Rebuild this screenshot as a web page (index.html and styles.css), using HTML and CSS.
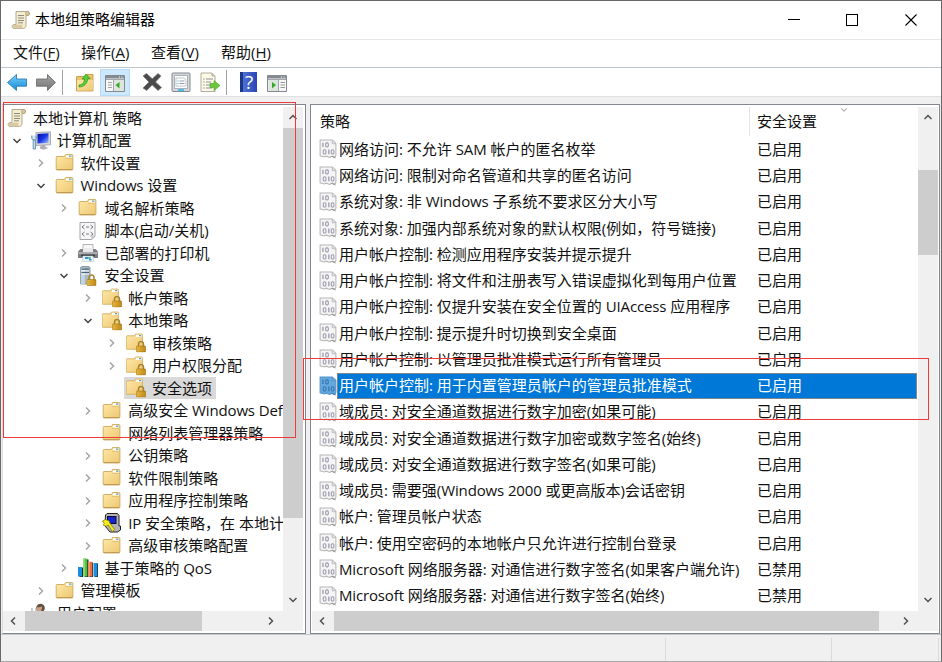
FILE: index.html
```html
<!DOCTYPE html>
<html lang="zh-CN">
<head>
    <meta charset="UTF-8">
    <title>本地组策略编辑器</title>
    <link rel="stylesheet" href="styles.css">
</head>
<body>
    <!-- 图标定义 -->
    <svg class="defs">
        <defs>
            <linearGradient id="gFolder" x1="0" y1="0" x2="1" y2="1"><stop offset="0" stop-color="#ffe9a8"/><stop offset="1" stop-color="#edc772"/></linearGradient>
            <linearGradient id="gLock" x1="0" y1="0" x2="1" y2="0"><stop offset="0" stop-color="#efc247"/><stop offset="1" stop-color="#b98010"/></linearGradient>
            <linearGradient id="gBlue" x1="0" y1="0" x2="0" y2="1"><stop offset="0" stop-color="#78d0fb"/><stop offset="1" stop-color="#148ad5"/></linearGradient>
            <linearGradient id="gGray" x1="0" y1="0" x2="0" y2="1"><stop offset="0" stop-color="#a5a5a5"/><stop offset="1" stop-color="#747474"/></linearGradient>
            <linearGradient id="gScreen" x1="0" y1="0" x2="1" y2="1"><stop offset="0" stop-color="#000c9c"/><stop offset=".5" stop-color="#1834e8"/><stop offset="1" stop-color="#a8c4ff"/></linearGradient>
        </defs>
        <symbol id="scroll" viewBox="0 0 20 20">
            <path d="M5 1.500h12c2 0 2 4 0 4h-2V15c0 2-1 3.500-2.500 3.500H3c-2.500 0-2.500-4 0-4h2z" fill="#f4edcf" stroke="#aaa083" stroke-width=".9"/>
            <path d="M15 5.500c-1-1-.5-4 1.500-4 2.300 0 2.300 4 .2 4z" fill="#d9c99a" stroke="#a99c78" stroke-width=".7"/>
            <path d="M1.500 16.500c.3 1.500 1 2 2 2h9c-1.200-.7-1.500-2-1-3.800H3c-1 0-1.500.8-1.500 1.800z" fill="#d8cba2"/>
            <path d="M7 5.500h6M7 8h6M7 10.500h6M7 12.800h5" stroke="#8d8a80" stroke-width="1"/>
        </symbol>
        <symbol id="folder" viewBox="0 0 20 20">
            <path d="M2 3.500h7.500l1-2h6.500c.5 0 .9.400.9.900V16c0 .5-.3.800-.8.800H2c-.5 0-.8-.3-.8-.8V4.300c0-.5.300-.8.800-.8z" fill="url(#gFolder)" stroke="#cda95c" stroke-width=".9"/>
            <path d="M11 2.300h6v2.200H11z" fill="#fffdf4"/><path d="M14 2.500h2.500v1.300H14z" fill="#53a5d8"/>
            <path d="M10 5.500h7.500" stroke="#dfbd73" stroke-width=".8"/>
            <path d="M1.500 16.700h16" stroke="#b88f45" stroke-width=".9"/>
        </symbol>
        <symbol id="lock" viewBox="0 0 10 12">
            <path d="M2.500 6V3.800a2.500 2.800 0 0 1 5 0V6" fill="none" stroke="#a7842d" stroke-width="1.500"/>
            <rect x=".4" y="5.500" width="9.200" height="6" rx=".6" fill="url(#gLock)" stroke="#a47414" stroke-width=".6"/>
            <path d="M1 7.500h8M1 9.500h8" stroke="#cf9d2b" stroke-width=".7"/>
        </symbol>
        <symbol id="folderlock" viewBox="0 0 20 20">
            <path d="M1 2.800h7.500l1-1.800h6c.5 0 .9.400.9.900v13.600c0 .5-.3.800-.8.800H1c-.5 0-.8-.3-.8-.8V3.600c0-.5.300-.8.800-.8z" fill="url(#gFolder)" stroke="#cda95c" stroke-width=".8"/>
            <path d="M10 1.800h5.500V4H10z" fill="#fffdf4"/><path d="M13 2h2v1.200h-2z" fill="#53a5d8"/>
            <use href="#lock" x="10" y="7.500" width="10" height="12"/>
        </symbol>
        <symbol id="computer" viewBox="0 0 20 20">
            <path d="M5 1.500 19.500.8v13l-14.500.7z" fill="#d5d6da" stroke="#9a9ca3" stroke-width=".8"/>
            <path d="M6.500 3 17.500 2.300v9.500L6.500 12.500z" fill="url(#gScreen)"/>
            <path d="m10 14 4-.2.600 2.200 3 1-5 1.700-4-1.200z" fill="#aeb0b5"/>
            <path d="M.8 4.500v3.200l1.700 1.500h1L5 7.700V4.500M2.200 9h2.200v9H2.200z" fill="#cfe6f4" stroke="#6790ac" stroke-width="1"/>
        </symbol>
        <symbol id="script" viewBox="0 0 20 20">
            <path d="M2 1.500h15v13.500l-3 3.500H2z" fill="#f6f6f8" stroke="#a4a4a8" stroke-width="1"/>
            <path d="M6.500 4 4 6l2.500 2M12.500 4 15 6l-2.500 2M8 6h3M6.500 11 4 13l2.500 2M12.500 11l2.500 2-2.500 2M8 13h3" fill="none" stroke="#77777d" stroke-width="1"/>
            <path d="m17 14-4 .5.500 4z" fill="#ccc"/>
        </symbol>
        <symbol id="printer" viewBox="0 0 20 20">
            <path d="M5 1.500h10V8H5z" fill="#f7f7f7" stroke="#a2a2a2" stroke-width=".8"/>
            <path d="M2.500 6h15L20 8.500V15H0V8.500z" fill="#7b7e83"/>
            <path d="M5 5h10v4H5z" fill="#eaeaea"/><path d="M.5 9h19v2.200H.5z" fill="#a9acb1"/>
            <path d="M3 11.500h14v2H3z" fill="#3c3e42"/>
            <path d="M5 13h10l1 5.500H4z" fill="#e9f3f8" stroke="#b8c2c8" stroke-width=".5"/>
            <path d="M7 14h3v2H7zM11 16h2.500v1.500H11z" fill="#2a96d5"/><path d="M10 14h3v2h-3z" fill="#6cc1a3"/>
        </symbol>
        <symbol id="server" viewBox="0 0 20 20">
            <path d="M2.500 1.500 4 .5h7l1 1V18H2.500z" fill="#a7bac7" stroke="#788c9c" stroke-width=".8"/>
            <path d="M2.800 2h4v16h-4z" fill="#c6d5dd"/>
            <path d="M3.500 3.200h7.500M3.500 6.500h7.500" stroke="#4e6474" stroke-width="1.200"/>
            <path d="M3.500 4.800h7.500M3.500 8h7.500" stroke="#f1f7fa" stroke-width="1"/>
            <use href="#lock" x="8.500" y="8" width="10" height="12"/>
        </symbol>
        <symbol id="ipsec" viewBox="0 0 20 20">
            <path d="M3.500 2 5 .5h10.500l1.500 2V13h1.500v4l-3 2H8L3 13z" fill="#b3b3b7" stroke="#222" stroke-width="1"/>
            <path d="M5 3h9.500v8H5z" fill="#0a0a30"/><path d="M6 4h7.500v6H6z" fill="#1626cf"/>
            <path d="m.5 8 3-1.500 3.500 1.300.7 2 4.800 6.700-2 2-4.300-6.500L4 13.300 1 12l1.300-1.500z" fill="#f6ec19" stroke="#7d7800" stroke-width=".7"/>
        </symbol>
        <symbol id="qos" viewBox="0 0 20 20">
            <path d="M1.500 9.500h3.500V19H1.500zM6.500 1.500h4V19h-4zM11.500 4.500h3.500V19h-3.500zM16.500 5.500h3.500V19h-3.500z" fill="#1c2733"/>
            <path d="M0 9h4v9.500H0z" fill="#1c8edb"/><path d="M5.300.5h4v18h-4z" fill="#54c23a"/>
            <path d="M10.500 3.800h3.800v14.700h-3.800z" fill="#f0703d"/><path d="M15.500 5h3.800v13.500h-3.800z" fill="#1c8edb"/>
            <path d="M5.300.5h1.500v18H5.300z" fill="#8fe07a"/><path d="M10.500 3.800h1.300v14.700h-1.300z" fill="#ff9c70"/>
        </symbol>
        <symbol id="user" viewBox="0 0 20 20">
            <circle cx="9.500" cy="5" r="4.300" fill="#5f5148"/><path d="M6 4c2 1 3 0 5-.5 0 3-1 6-3 6S6 7 6 4z" fill="#d79f7e"/>
            <path d="M4 19c0-6 3-9 6-9s7 3 7 9z" fill="#6f8798"/>
            <path d="M1 5v3l2 2 2-2V5" fill="none" stroke="#9bb4c2" stroke-width="1.200"/>
        </symbol>
        <symbol id="policy" viewBox="0 0 17 19">
            <path d="M1 1h11.500L16 4v11.500l-1 2-2.500-1.300L10 17.500l-3-1.200L5 17l-4-1z" fill="var(--paper, #f5f5f6)" stroke="var(--edge, #b6b6b8)" stroke-width="1"/>
            <path d="M12.500 1v3.500H16" fill="var(--paper, #ddd)" stroke="var(--edge, #b6b6b8)" stroke-width=".8"/>
            <g fill="none" stroke="var(--ink, #9a99ac)">
                <path d="M3.700 3.500v4M9.300 10v4.500" stroke-width="1.200"/>
                <rect x="6.300" y="3.700" width="2.500" height="3.800" rx="1"/>
                <rect x="4" y="10.200" width="2.500" height="4" rx="1"/>
                <rect x="11.600" y="10.200" width="2.500" height="4" rx="1"/>
            </g>
            <path d="M10 16.500h4.500l1.500 2z" fill="var(--ink, #999)"/>
        </symbol>
        <symbol id="chev" viewBox="0 0 10 10"><path d="M1.500 3 5 6.500 8.500 3" fill="none" stroke="currentColor" stroke-width="1.500"/></symbol>
    </svg>

    <div class="window">
        <div class="titlebar">
            <svg class="app-icon"><use href="#scroll"/></svg>
            <span class="title">本地组策略编辑器</span>
            <svg class="win-btns" viewBox="0 0 130 14" shape-rendering="crispEdges">
                <path d="M0 6.500h12M58.500 1.500h11v11h-11z" fill="none" stroke="#000"/>
                <path d="m117.500 1.500 11 11m0-11-11 11" stroke="#000" fill="none" shape-rendering="auto" stroke-width="1.100"/>
            </svg>
        </div>

        <div class="menubar">
            <span>文件(<u>F</u>)</span><span>操作(<u>A</u>)</span><span>查看(<u>V</u>)</span><span>帮助(<u>H</u>)</span>
        </div>

        <div class="toolbar">
            <svg class="tool" viewBox="0 0 20 20"><path d="M.5 10.500 9.500 2.500V7H19.500v7.200H9.500V18.500z" fill="url(#gBlue)" stroke="#2c7fb4" stroke-width=".9"/></svg>
            <svg class="tool fwd" viewBox="0 0 20 20"><path d="M19.500 10.500 11.500 2.500V7H.5v7.200h11V18.500z" fill="url(#gGray)" stroke="#707070" stroke-width=".9"/></svg>
            <i class="sep"></i>
            <svg class="tool up" viewBox="0 0 20 20">
                <path d="M1.500 4.500H10l1.500-2H18v16.500H1.500z" fill="#ebc56e" stroke="#bc9240" stroke-width=".8"/>
                <path d="M2 8h16v10.500H2z" fill="url(#gFolder)"/>
                <path d="M4 13c4.500-.5 5.300-3.500 5.500-6H7l4-5 4.300 4.700h-2.500C12.500 11 9.500 15 4 15z" fill="#56ce36" stroke="#329524" stroke-width=".7"/>
            </svg>
            <span class="tool-on">
                <svg class="tool" viewBox="0 0 20 20">
                    <path d="M.5 3.500h19v16H.5z" fill="#f7f7f7" stroke="#85898e"/><path d="M1 4h18v2.500H1z" fill="#848a92"/>
                    <path d="M14 4.500h1v1h-1zM16.500 4.500h1v1h-1z" fill="#fff"/><path d="M1 7.500h18M8.500 8v11" stroke="#a3a7ac"/>
                    <path d="M3 10.500h4M3 13h4M3 15.500h4" stroke="#a4a4a4"/><path d="M9 8h10v11H9z" fill="#dce6dc"/><path d="M14.500 10v6.500L10.500 13z" fill="#3aa52b"/>
                </svg>
            </span>
            <svg class="tool del" viewBox="0 0 20 20"><path d="m1 4 3.500-2.500 5.800 5.300L16 1.500 19 4l-5.500 6 6 5.500-3.500 3-5.800-5.500-5.500 5.500-3.700-2.500L7 10z" fill="#4b4b4b" stroke="#777" stroke-width=".7"/></svg>
            <svg class="tool prop" viewBox="0 0 20 20">
                <rect x="1" y="1" width="18" height="18.500" rx="1" fill="#d3d7dc" stroke="#84898f"/>
                <path d="M3.500 3.500h13v13h-13z" fill="#fbfbfb" stroke="#9ca2a8" stroke-width=".8"/><path d="M5 6h8l2 2v6H5z" fill="#fff" stroke="#b3b7bd" stroke-width=".8"/>
                <path d="M6.500 9h1M6.500 11.500h1" stroke="#2a9fe0"/><path d="M8.500 9h5M8.500 11.500h5" stroke="#9299a0"/><path d="M7 18h6" stroke="#29b5e8" stroke-width="1.500"/>
            </svg>
            <svg class="tool exp" viewBox="0 0 20 20">
                <path d="M1 1h11l3 3v15.500H1z" fill="#fdf9e7" stroke="#a9a391" stroke-width=".9"/><path d="M12 1v3h3" fill="#ddd4b8" stroke="#a9a391" stroke-width=".8"/>
                <path d="M3.500 7h1M3.500 10h1M3.500 13h1M3.500 16h1" stroke="#5a5a64"/><path d="M6 7h7M6 10h5M6 13h4M6 16h6" stroke="#8d8b9b"/>
                <path d="M10 11.500h4v-3l6 5-6 5v-3h-4z" fill="#6cc73d" stroke="#47a52d" stroke-width=".6"/>
            </svg>
            <i class="sep sep2"></i>
            <span class="help">?</span>
            <svg class="tool act" viewBox="0 0 20 20">
                <path d="M.5 3.500h19v16H.5z" fill="#f7f7f7" stroke="#85898e"/><path d="M1 4h18v2.500H1z" fill="#848a92"/>
                <path d="M14 4.500h1v1h-1zM16.500 4.500h1v1h-1z" fill="#fff"/><path d="M1 7.500h18M11.500 8v11" stroke="#a3a7ac"/>
                <path d="M1.500 8H11v11H1.500z" fill="#dce6dc"/><path d="M13.500 10.500H18M13.500 13H18M13.500 15.500H18" stroke="#999"/><path d="M5 10v6.500L9 13z" fill="#3aa52b"/>
            </svg>
        </div>

        <div class="main">
            <div class="pane tree-pane">
                <div class="tree" id="tree"></div>
                <div class="vbar">
                    <svg class="arrow up-arrow"><use href="#chev"/></svg>
                    <div class="thumb"></div>
                    <svg class="arrow"><use href="#chev"/></svg>
                </div>
                <div class="hbar">
                    <svg class="arrow left-arrow"><use href="#chev"/></svg>
                    <div class="thumb"></div>
                    <svg class="arrow right-arrow"><use href="#chev"/></svg>
                </div>
                <div class="corner"></div>
            </div>

            <div class="pane list-pane">
                <div class="list">
                    <div class="list-head">
                        <span class="col1">策略</span>
                        <span class="col2">安全设置<svg class="sort"><use href="#chev"/></svg></span>
                    </div>
                    <div id="rows"></div>
                </div>
                <div class="vbar">
                    <svg class="arrow up-arrow"><use href="#chev"/></svg>
                    <div class="thumb"></div>
                    <svg class="arrow"><use href="#chev"/></svg>
                </div>
                <div class="hbar">
                    <svg class="arrow left-arrow"><use href="#chev"/></svg>
                    <div class="thumb"></div>
                    <svg class="arrow right-arrow"><use href="#chev"/></svg>
                </div>
                <div class="corner"></div>
            </div>
        </div>

        <div class="statusbar"><span></span><span></span><span></span></div>

        <!-- 红色标注框 -->
        <div class="mark mark-tree"></div>
        <div class="mark mark-row"></div>
    </div>

    <script>
        // [层级, 图标, 名称, 展开状态]
        const tree = [
            [0, 'scroll', '本地计算机 策略', ''],
            [1, 'computer', '计算机配置', 'open'],
            [2, 'folder', '软件设置', 'closed'],
            [2, 'folder', 'Windows 设置', 'open'],
            [3, 'folder', '域名解析策略', 'closed'],
            [3, 'script', '脚本(启动/关机)', ''],
            [3, 'printer', '已部署的打印机', 'closed'],
            [3, 'server', '安全设置', 'open'],
            [4, 'folderlock', '帐户策略', 'closed'],
            [4, 'folderlock', '本地策略', 'open'],
            [5, 'folderlock', '审核策略', 'closed'],
            [5, 'folderlock', '用户权限分配', 'closed'],
            [5, 'folderlock', '安全选项', '', true],
            [4, 'folder', '高级安全 Windows Def', 'closed'],
            [4, 'folder', '网络列表管理器策略', ''],
            [4, 'folder', '公钥策略', 'closed'],
            [4, 'folder', '软件限制策略', 'closed'],
            [4, 'folder', '应用程序控制策略', 'closed'],
            [4, 'ipsec', 'IP 安全策略，在 本地计', 'closed'],
            [4, 'folder', '高级审核策略配置', 'closed'],
            [3, 'qos', '基于策略的 QoS', 'closed'],
            [2, 'folder', '管理模板', 'closed'],
            [1, 'user', '用户配置', '']
        ];

        const policies = [
            ['网络访问: 不允许 SAM 帐户的匿名枚举', '已启用'],
            ['网络访问: 限制对命名管道和共享的匿名访问', '已启用'],
            ['系统对象: 非 Windows 子系统不要求区分大小写', '已启用'],
            ['系统对象: 加强内部系统对象的默认权限(例如，符号链接)', '已启用'],
            ['用户帐户控制: 检测应用程序安装并提示提升', '已启用'],
            ['用户帐户控制: 将文件和注册表写入错误虚拟化到每用户位置', '已启用'],
            ['用户帐户控制: 仅提升安装在安全位置的 UIAccess 应用程序', '已启用'],
            ['用户帐户控制: 提示提升时切换到安全桌面', '已启用'],
            ['用户帐户控制: 以管理员批准模式运行所有管理员', '已启用'],
            ['用户帐户控制: 用于内置管理员帐户的管理员批准模式', '已启用'],
            ['域成员: 对安全通道数据进行数字加密(如果可能)', '已启用'],
            ['域成员: 对安全通道数据进行数字加密或数字签名(始终)', '已启用'],
            ['域成员: 对安全通道数据进行数字签名(如果可能)', '已启用'],
            ['域成员: 需要强(Windows 2000 或更高版本)会话密钥', '已启用'],
            ['帐户: 管理员帐户状态', '已启用'],
            ['帐户: 使用空密码的本地帐户只允许进行控制台登录', '已启用'],
            ['Microsoft 网络服务器: 对通信进行数字签名(如果客户端允许)', '已禁用'],
            ['Microsoft 网络服务器: 对通信进行数字签名(始终)', '已禁用']
        ];
        const selected = 9;

        // 西文单词单独调整字距
        function latin(text) {
            return text.replace(/[A-Za-z0-9]+/g, '<span class="en">$&</span>');
        }

        document.getElementById('tree').innerHTML = tree.map(([level, icon, name, state, active]) => `
            <div class="node${active ? ' active' : ''}" style="--level:${level}">
                <span class="twisty ${state}">${state ? '<svg><use href="#chev"/></svg>' : ''}</span>
                <span class="node-body"><svg class="node-icon"><use href="#${icon}"/></svg><span class="node-text">${latin(name)}</span></span>
            </div>`).join('');

        document.getElementById('rows').innerHTML = policies.map(([name, value], i) => `
            <div class="row${i === selected ? ' selected' : ''}">
                <svg class="row-icon"><use href="#policy"/></svg>
                <div class="cells"><span class="name">${latin(name)}</span><span class="value">${value}</span></div>
            </div>`).join('');
    </script>
</body>
</html>
```
FILE: styles.css
```css
* {
    margin: 0;
    padding: 0;
    box-sizing: border-box;
}

body {
    width: 942px;
    height: 662px;
    overflow: hidden;
    font-family: "Open Sans", "Noto Sans CJK SC", sans-serif;
    font-size: 15px;
    color: #111;
    background: #f0f0f0;
}

svg {
    display: block;
    flex: none;
}

.defs {
    position: absolute;
    width: 0;
    height: 0;
}

.en {
    letter-spacing: -0.15px;
}

.window {
    position: relative;
    display: flex;
    flex-direction: column;
    width: 942px;
    height: 662px;
    border: 1px solid #68686a;
    border-bottom-color: #aaa;
    background: #f0f0f0;
}

/* 标题栏 */
.titlebar {
    display: flex;
    align-items: center;
    height: 39px;
    padding: 0 23px 0 10px;
    background: #fff;
    border-bottom: 1px solid #e6e6e6;
    color: #000;
}

.title {
    padding-bottom: 4px;
}

.app-icon {
    width: 20px;
    height: 20px;
    margin-right: 4px;
}

.win-btns {
    width: 130px;
    height: 14px;
    margin-left: auto;
}

/* 菜单栏 */
.menubar {
    display: flex;
    align-items: center;
    height: 28px;
    padding: 0 0 4px 12px;
    background: #fff;
    border-bottom: 1px solid #bfc6cc;
}

.menubar span {
    width: 70px;
}

.menubar span:first-child {
    width: 68px;
}

.menubar u {
    text-underline-offset: 2px;
    text-decoration-thickness: 1px;
}

/* 工具栏 */
.toolbar {
    display: flex;
    align-items: center;
    height: 29px;
    padding-left: 6px;
    background: #fff;
    border-bottom: 1px solid #e0e0e0;
}

.tool {
    width: 20px;
    height: 20px;
}

.fwd {
    margin-left: 9px;
}

.sep {
    width: 1px;
    height: 25px;
    margin-left: 6px;
    background: #a0a0a0;
}

.up {
    margin-left: 12px;
}

.tool-on {
    display: flex;
    align-items: center;
    justify-content: center;
    width: 30px;
    height: 27px;
    margin-left: 5px;
    background: #cce8ff;
    border: 1px solid #b5dcf8;
}

.del {
    margin-left: 12px;
}

.prop,
.exp {
    margin-left: 9px;
}

.help {
    width: 17px;
    height: 20px;
    margin-left: 13px;
    background: linear-gradient(90deg, #1c3788 3px, #4f70d3 3px, #2746b4);
    color: #fff;
    font-size: 19px;
    line-height: 20px;
    padding-left: 5px;
}

.act {
    margin-left: 10px;
}

/* 主体 */
.main {
    display: grid;
    grid-template-columns: 304px 630px;
    column-gap: 4px;
    height: 530px;
    margin-top: 7px;
    padding-left: 1px;
}

.pane {
    display: grid;
    grid-template-rows: 504px 20px;
    padding-top: 2px;
    background: #fff;
    border: 1px solid #828790;
}

.tree-pane {
    grid-template-columns: 280px 20px;
    border-left-color: #dcdcdc;
}

.list-pane {
    grid-template-columns: 606px 20px;
    padding-left: 1px;
}

.tree,
.list {
    overflow: hidden;
}

.node {
    display: flex;
    align-items: center;
    height: 22.5px;
    padding-left: calc(var(--level) * 23.8px - 20px);
    white-space: nowrap;
}

/* 根节点没有展开箭头 */
.node:first-child {
    padding-left: 4px;
}

.node:first-child .twisty {
    display: none;
}

.twisty {
    flex: none;
    width: 20px;
    margin-right: 2px;
    color: #404040;
}

.twisty svg {
    width: 10px;
    height: 10px;
    margin: 0 auto;
}

.closed svg {
    color: #a6a6a6;
    transform: rotate(-90deg);
}

.node-body {
    display: flex;
    align-items: center;
    height: 22px;
}

.node-icon {
    width: 20px;
    height: 20px;
    margin-left: 2px;
}

.node-text {
    margin-left: 6px;
    padding-bottom: 2px;
}

.node:first-child .node-icon {
    margin-left: 0;
}

.active .node-body {
    padding-right: 4px;
    background: #d9d9d9;
}

/* 滚动条 */
.vbar,
.hbar {
    display: flex;
    align-items: center;
    background: #f0f0f0;
}

.vbar {
    flex-direction: column;
    justify-content: space-between;
}

.arrow {
    width: 10px;
    height: 10px;
    color: #505050;
}

.up-arrow {
    transform: rotate(180deg);
}

.left-arrow {
    transform: rotate(90deg);
}

.right-arrow {
    transform: rotate(-90deg);
}

.thumb {
    background: #cdcdcd;
}

.vbar .thumb {
    width: 20px;
}

.hbar .thumb {
    height: 20px;
}

.vbar .arrow {
    margin: 5px 0 6px;
}

.hbar .arrow {
    margin: 0 7px 0 5px;
}

.tree-pane .vbar .thumb {
    height: 390px;
    margin-bottom: auto;
}

.tree-pane .hbar .thumb {
    width: 177px;
    margin-right: auto;
}

.list-pane .vbar .thumb {
    height: 85px;
    margin: 42px 0 auto;
}

.list-pane .hbar .thumb {
    width: 545px;
    margin-right: auto;
}

.corner {
    background: #f0f0f0;
}

/* 策略列表 */
.list-head {
    display: flex;
    height: 29.3px;
    line-height: 29px;
}

.col1 {
    width: 438px;
    padding-left: 8px;
    border-right: 1px solid #e5e5e5;
}

.col2 {
    position: relative;
    padding-left: 7px;
}

.sort {
    position: absolute;
    top: -1px;
    left: 90px;
    width: 8px;
    height: 8px;
    color: #b5b5b5;
}

.row {
    display: flex;
    align-items: center;
    height: 26.26px;
    padding-left: 7px;
}

.row-icon {
    width: 18px;
    height: 20px;
}

.cells {
    display: flex;
    align-items: center;
    width: 580px;
    height: 26.26px;
    padding: 0 0 2px 2px;
    white-space: nowrap;
}

.name {
    width: 418px;
}

.selected .cells {
    background: #0078d7;
    color: #fff;
    outline: 1px solid #7d8790;
    outline-offset: -1px;
}

.selected .row-icon {
    --paper: #62a8dc;
    --edge: #5295cb;
    --ink: #3878b4;
}

/* 状态栏 */
.statusbar {
    display: flex;
    flex: 1;
    padding-top: 3px;
    border-top: 1px solid #c4c6ca;
}

.statusbar span {
    border-right: 1px solid #dadada;
}

.statusbar span:nth-child(1) {
    width: 665px;
}

.statusbar span:nth-child(2) {
    width: 166px;
}

.statusbar span:nth-child(3) {
    width: 107px;
}

/* 标注框 */
.mark {
    position: absolute;
    border: 1px solid #f03a3a;
}

.mark-tree {
    left: 2px;
    top: 101px;
    width: 293px;
    height: 336px;
}

.mark-row {
    left: 302px;
    top: 357px;
    width: 626px;
    height: 62px;
}
```
